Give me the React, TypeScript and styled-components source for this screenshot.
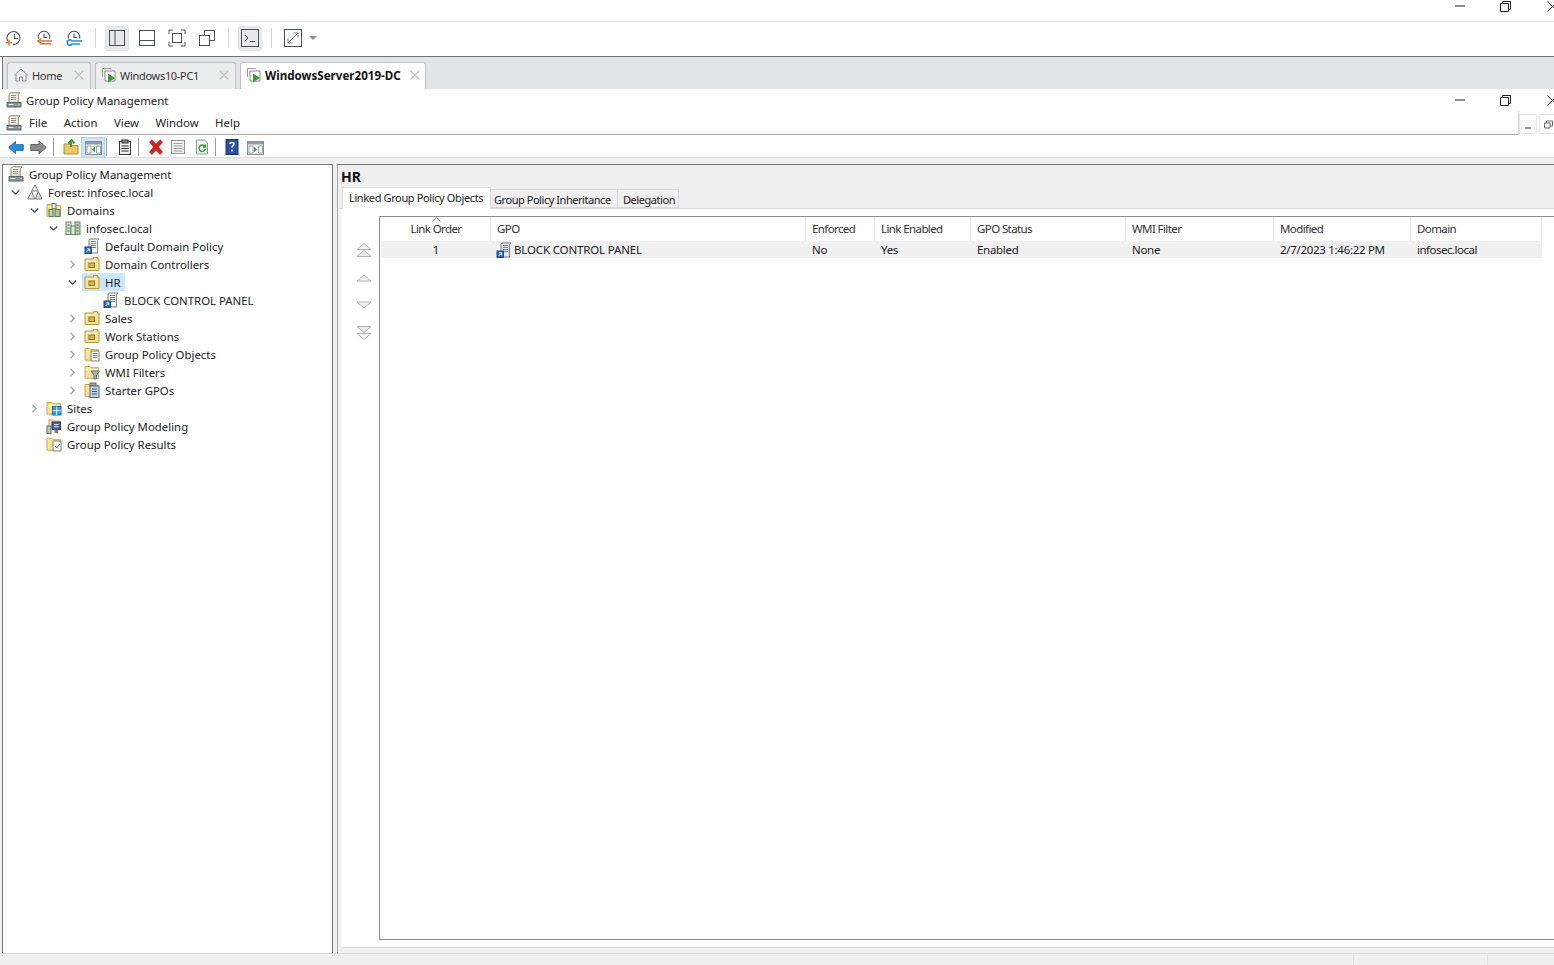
import React from "react";
import styled, { createGlobalStyle } from "styled-components";

const GlobalStyle = createGlobalStyle`
    html, body {
        margin: 0;
        padding: 0;
        background: #fff;
        overflow: hidden;
    }
    #root {
        height: 965px;
    }
`;

// ---------- icons ----------

const Svg = ({ size = 16, children }: { size?: number; children: React.ReactNode }) => (
    <svg width={size} height={size} viewBox="0 0 16 16" fill="none" style={{ display: "block", flexShrink: 0 }}>
        {children}
    </svg>
);

const GpmIcon = () => (
    <Svg>
        <path d="M4.5 .8h9.5l-1.8 2v7.5H3V2.5z" fill="#f6f2e2" stroke="#85857a" />
        <path d="M5 3.5h5M5 5.5h5M5 7.5h5" stroke="#8f8f85" />
        <path d="M1 10.5h14v4.5H1z" fill="#8a9397" stroke="#5e6468" />
        <path d="M2.5 12.5h5" stroke="#e6ecee" />
        <path d="M12 12.5h2" stroke="#a8d8a0" />
    </Svg>
);

const ForestIcon = () => (
    <Svg>
        <path d="M8 1l3.2 6H4.8z" fill="#f2f2f2" stroke="#7c7c7c" />
        <path d="M4.6 7.5l3.2 7.5H.8z" fill="#e6e6e6" stroke="#7c7c7c" />
        <path d="M11.4 7.5l3.6 7.5H8.2z" fill="#d5d5d5" stroke="#7c7c7c" />
    </Svg>
);

const FolderBase = () => (
    <>
        <path d="M1 2.5h5l1.2 1.2h7.3v10.5H1z" fill="#f7e29b" stroke="#c8a953" />
        <path d="M2 5.5h11.5" stroke="#fff6d2" />
    </>
);

const OuIcon = () => (
    <Svg>
        <path d="M1 3h8.5V1.4h4V3H15v11.5H1z" fill="#f7e29b" stroke="#b99a45" />
        <path d="M2 5h12" stroke="#fff6d2" />
        <rect x="5" y="7" width="5.5" height="4.5" fill="#d9b54a" stroke="#8d7429" />
    </Svg>
);

const DomainsIcon = () => (
    <Svg>
        <FolderBase />
        <rect x="6" y="1.5" width="4" height="5" fill="#dfe8dc" stroke="#6f8a6c" />
        <rect x="3" y="7.5" width="4" height="7" fill="#b9d0b5" stroke="#5f7a5c" />
        <rect x="9" y="7.5" width="5" height="7" fill="#a9c4a6" stroke="#5f7a5c" />
    </Svg>
);

const DomainIcon = () => (
    <Svg>
        <rect x="1" y="2" width="5" height="12.5" fill="#cfe0ca" stroke="#6a8a68" />
        <rect x="10" y="2" width="5" height="12.5" fill="#b6d0b2" stroke="#6a8a68" />
        <rect x="6" y="6" width="4" height="8.5" fill="#e3ece0" stroke="#6a8a68" />
        <path d="M2.5 5h2M2.5 8h2M2.5 11h2M11.5 5h2M11.5 8h2M11.5 11h2" stroke="#47664a" />
    </Svg>
);

const GpoLinkIcon = ({ color = "#f7f7f4" }: { color?: string }) => (
    <Svg>
        <path d="M6 1h9l-1.4 1.6V15H5V2.5z" fill={color} stroke="#7f7f78" />
        <path d="M7 3.5h5M7 5.5h5M7 7.5h5M8 9.5h4" stroke="#6f7f90" />
        <rect x="1" y="9" width="6.5" height="6.5" fill="#2f6db3" stroke="#1d4a80" />
        <path d="M2.5 14l3-3M3.2 10.8h2.5v2.5" stroke="#fff" strokeWidth=".9" />
    </Svg>
);

const GpoFolderIcon = () => (
    <Svg>
        <FolderBase />
        <path d="M7 5h8v10H7z" fill="#f7f7f2" stroke="#80807a" />
        <path d="M8.5 7.5h5M8.5 9.5h5M8.5 11.5h5" stroke="#80807a" />
    </Svg>
);

const WmiIcon = () => (
    <Svg>
        <FolderBase />
        <path d="M7 7h8.5l-3 4v4h-2.5v-4z" fill="#9fb7c9" stroke="#5d7488" />
    </Svg>
);

const StarterIcon = () => (
    <Svg>
        <FolderBase />
        <rect x="6" y="1" width="6" height="3" fill="#a8a8a0" stroke="#66665f" />
        <rect x="6" y="4" width="9" height="11.5" fill="#c3d4e6" stroke="#4e6880" />
        <path d="M8 7h5M8 9.5h5M8 12h5" stroke="#3f5870" />
    </Svg>
);

const SitesIcon = () => (
    <Svg>
        <FolderBase />
        <rect x="6.5" y="6.5" width="8.5" height="8.5" fill="#3f9bd8" stroke="#1f6fa8" />
        <path d="M10.7 6.5V15M6.5 10.7H15" stroke="#d7effc" />
    </Svg>
);

const ModelingIcon = () => (
    <Svg>
        <path d="M3 2h5l1 1h5v6H3z" fill="#f7e29b" stroke="#c8a953" />
        <rect x="6" y="4" width="8.5" height="7.5" fill="#4a5fa8" stroke="#2b3a75" />
        <path d="M8 6.5h4.5M8 8.7h4.5" stroke="#e3e8ff" />
        <rect x="8.5" y="11.5" width="3.5" height="3.5" fill="#7a7a80" />
        <rect x="1" y="8" width="4" height="7.5" fill="#b9c8b9" stroke="#5f6f5f" />
    </Svg>
);

const ResultsIcon = () => (
    <Svg>
        <FolderBase />
        <path d="M7 5h8v10H7z" fill="#f7f7f2" stroke="#80807a" />
        <path d="M9 10l1.8 2 3-4" stroke="#2d6fb0" />
    </Svg>
);

const Chevron = ({ open }: { open: boolean }) => (
    <svg width="9" height="9" viewBox="0 0 9 9" fill="none" style={{ display: "block" }}>
        {open ? (
            <path d="M.8 2.5l3.7 3.7 3.7-3.7" stroke="#4d4d4d" strokeWidth="1.3" />
        ) : (
            <path d="M2.5 .8l3.7 3.7-3.7 3.7" stroke="#a6a6a6" strokeWidth="1.3" />
        )}
    </svg>
);

const HistoryIcon = ({ accent, kind }: { accent: string; kind: "add" | "back" | "tool" }) => (
    <svg width="18" height="18" viewBox="0 0 18 18" fill="none" style={{ display: "block" }}>
        {kind === "add" ? (
            <path d="M3 12.5A6.5 6.5 0 1 1 8 15.5M9.5 5v4.5H13" stroke="#4a5560" strokeWidth="1.1" />
        ) : (
            <path d="M3.4 9.5a5.8 5.8 0 1 1 11.2 0M9 4.5v4h3" stroke="#4a5560" strokeWidth="1.1" />
        )}
        {kind === "add" && <path d="M1 13.5h6M4 10.5v6" stroke={accent} strokeWidth="1.4" />}
        {kind === "back" && <path d="M17 12H4M6.5 9.5L3 12l3.5 2.5M5 14.8h11" stroke={accent} strokeWidth="1.5" />}
        {kind === "tool" && (
            <path d="M17 12H7a2.6 2.6 0 1 0 0 3h8M1.5 12h2" stroke={accent} strokeWidth="1.6" />
        )}
    </svg>
);

const LineIcon = ({ children }: { children: React.ReactNode }) => (
    <svg width="18" height="18" viewBox="0 0 18 18" fill="none" stroke="#4a4f55" strokeWidth="1" style={{ display: "block" }}>
        {children}
    </svg>
);

const VmIcon = () => (
    <Svg>
        <path d="M1.5 10V1.5H10" stroke="#9a9a9a" />
        <path d="M4 13V4h10v10H4z" fill="#fff" stroke="#8a8a8a" />
        <path d="M7 6.5l7 4.5-7 4.5z" fill="#3c9a2e" />
    </Svg>
);

const HomeIcon = () => (
    <Svg>
        <path d="M1 8.5L8 2l7 6.5M3 7.5V14h3.5v-4h3v4H13V7.5" stroke="#8a9099" />
    </Svg>
);

const TabClose = ({ color = "#c0c0c0" }: { color?: string }) => (
    <svg width="10" height="10" viewBox="0 0 10 10" fill="none" style={{ display: "block", flexShrink: 0 }}>
        <path d="M.5 .5l9 9M9.5 .5l-9 9" stroke={color} strokeWidth="1.2" />
    </svg>
);

const MinimizeGlyph = () => (
    <svg width="10" height="10" viewBox="0 0 10 10" style={{ display: "block" }}>
        <path d="M0 5h10" stroke="#222" />
    </svg>
);

const RestoreGlyph = () => (
    <svg width="11" height="11" viewBox="0 0 11 11" fill="none" style={{ display: "block" }}>
        <path d="M.5 2.5h8v8h-8zM2.5 2.5v-2h8v8h-2" stroke="#222" />
    </svg>
);

const CloseGlyph = () => (
    <svg width="11" height="11" viewBox="0 0 11 11" fill="none" style={{ display: "block" }}>
        <path d="M.5 .5l10 10M10.5 .5l-10 10" stroke="#222" />
    </svg>
);

const ArrowLeft = ({ fill, stroke, flip }: { fill: string; stroke: string; flip?: boolean }) => (
    <svg width="17" height="15" viewBox="0 0 17 15" style={{ display: "block", transform: flip ? "scaleX(-1)" : undefined }}>
        <path d="M.8 7.5L8 1v3.5h8.2v6H8V14z" fill={fill} stroke={stroke} />
    </svg>
);

const MoveArrow = ({ dir, double }: { dir: "up" | "down"; double?: boolean }) => (
    <svg width="16" height="16" viewBox="0 0 16 16" fill="none" style={{ display: "block", transform: dir === "down" ? "scaleY(-1)" : undefined }}>
        {double ? (
            <>
                <path d="M1 7.5L8 1.5l7 6z" fill="#f2f2f2" stroke="#b0b0b0" />
                <path d="M1 14.5L8 8.5l7 6z" fill="#e8e8e8" stroke="#b0b0b0" />
            </>
        ) : (
            <path d="M1 11L8 5l7 6z" fill="#f2f2f2" stroke="#b0b0b0" />
        )}
    </svg>
);

const WindowIcon = ({ play }: { play: "left" | "right" }) => (
    <svg width="17" height="15" viewBox="0 0 17 15" fill="none" style={{ display: "block" }}>
        <rect x=".5" y="1.5" width="16" height="13" fill="#f4f4f0" stroke="#8a8f92" />
        <path d="M1 2h15v2.5H1z" fill="#8fa0a8" />
        <path d="M2 6h4v7H2zM11.5 6h4v7h-4z" stroke="#9aa3a8" fill="#fff" />
        <path d={play === "left" ? "M10 6.8L7 9.5l3 2.7z" : "M7 6.8l3 2.7-3 2.7z"} fill="#3f8f50" />
    </svg>
);

// ---------- app chrome ----------

const Page = styled.div`
    display: flex;
    flex-direction: column;
    width: 1554px;
    height: 965px;
    overflow: hidden;
    background: #fff;
    font-family: "Noto Sans", "Open Sans", sans-serif;
    font-size: 11.4px;
    color: #222;
`;

const TitleBar = styled.div`
    display: flex;
    justify-content: flex-end;
    height: 21px;
    flex-shrink: 0;
    border-bottom: 1px solid #e4e4e4;
`;

const Controls = styled.div<{ $offset: number }>`
    display: flex;
    margin-right: -21px;
    padding-top: ${props => props.$offset}px;
`;

const ControlBox = styled.div`
    display: flex;
    justify-content: center;
    width: 46px;
`;

const RestoreBox = styled(ControlBox)`
    box-sizing: border-box;
    padding-right: 2px;
`;

const VmToolbar = styled.div`
    display: flex;
    align-items: center;
    gap: 6px;
    height: 32px;
    padding: 0 0 2px 2px;
    flex-shrink: 0;
    border-bottom: 1px solid #6f7173;
`;

const VmButton = styled.div<{ $active?: boolean }>`
    display: flex;
    align-items: center;
    justify-content: center;
    width: 24px;
    height: 25px;
    border-radius: 3px;
    background: ${props => props.$active ? "#e8e9ea" : "transparent"};
    border: 1px solid ${props => props.$active ? "#e2e3e4" : "transparent"};
    box-sizing: border-box;
`;

const VmSeparator = styled.div`
    width: 1px;
    height: 20px;
    margin: 0 3px;
    background: #d4d4d4;
`;

const Caret = styled.div`
    width: 0;
    height: 0;
    margin-left: -2px;
    border-left: 4px solid transparent;
    border-right: 4px solid transparent;
    border-top: 4px solid #8b8f93;
`;

const TabStrip = styled.div`
    display: flex;
    align-items: flex-end;
    gap: 4px;
    height: 32px;
    padding-left: 4px;
    margin-left: 2px;
    flex-shrink: 0;
    background: #e3e4e5;
    border-left: 1px solid #77797b;
`;

const VmTab = styled.div<{ $width: number; $active?: boolean }>`
    display: flex;
    align-items: center;
    gap: 2px;
    box-sizing: border-box;
    width: ${props => props.$width}px;
    height: 27px;
    padding: 0 ${props => props.$active ? 5 : 6}px 2px 5px;
    border: 1px solid #bdbfc1;
    border-bottom: none;
    border-radius: 3px 3px 0 0;
    background: ${props => props.$active ? "#fff" : "#eceded"};
    font-size: ${props => props.$active ? "11.6px" : "11px"};
    letter-spacing: ${props => props.$active ? "0" : "-0.3px"};
    font-weight: ${props => props.$active ? 700 : 400};
    color: ${props => props.$active ? "#111" : "#333"};
`;

const VmTabLabel = styled.span`
    flex: 1;
    padding-left: 1px;
    white-space: nowrap;
`;

// ---------- mmc ----------

const MmcTitle = styled.div`
    display: flex;
    align-items: center;
    gap: 4px;
    height: 22px;
    padding-left: 6px;
    flex-shrink: 0;
`;

const MmcTitleText = styled.span`
    flex: 1;
    white-space: nowrap;
`;

const MenuRow = styled.div`
    display: flex;
    height: 24px;
    flex-shrink: 0;
`;

const MenuBar = styled.div`
    flex: 1;
    display: flex;
    align-items: center;
    gap: 16.5px;
    padding-left: 6px;
    border-bottom: 1px solid #ababab;
    border-right: 1px solid #d8d8d8;
`;

const MenuIcon = styled.div`
    width: 23px;
    margin-right: -16.5px;
`;

const MdiButtons = styled.div`
    display: flex;
    gap: 2px;
    width: 35px;
    padding: 3px 0 0 0;
`;

const MdiButton = styled.div`
    display: flex;
    align-items: center;
    justify-content: center;
    flex-shrink: 0;
    width: 16px;
    height: 18px;
    border: 1px solid #e6e6e6;
`;

const MmcToolbar = styled.div`
    display: flex;
    align-items: center;
    box-sizing: border-box;
    height: 23px;
    padding: 2px 0 0 7px;
    flex-shrink: 0;
    border-bottom: 1px solid #dedede;
`;

const ToolButton = styled.div<{ $active?: boolean; $width?: number }>`
    display: flex;
    align-items: center;
    justify-content: center;
    flex-shrink: 0;
    box-sizing: border-box;
    width: ${props => props.$width ?? 23}px;
    height: 21px;
    background: ${props => props.$active ? "#cde6f7" : "transparent"};
    border: 1px solid ${props => props.$active ? "#a8d4f0" : "transparent"};
`;

const ToolGap = styled.div<{ $width: number }>`
    width: ${props => props.$width}px;
    flex-shrink: 0;
`;

const ToolSeparator = styled.div`
    width: 1px;
    height: 18px;
    margin: 0 1px;
    background: #9c9c9c;
`;

const Spacer = styled.div`
    height: 6px;
    flex-shrink: 0;
    background: #f0f0f0;
`;

const Main = styled.div`
    flex: 1;
    display: flex;
    min-height: 0;
    background: #f0f0f0;
`;

// ---------- tree ----------

const TreePanel = styled.div`
    width: 329px;
    height: 788px;
    margin-left: 2px;
    flex-shrink: 0;
    background: #fff;
    border: 1px solid #77797b;
`;

const TreeRow = styled.div<{ $level: number }>`
    display: flex;
    align-items: center;
    height: 18px;
    padding-left: ${props => props.$level === 0 ? 5 : 3 + (props.$level - 1) * 19}px;
    white-space: nowrap;
`;

const Twisty = styled.div`
    display: flex;
    align-items: center;
    justify-content: center;
    box-sizing: border-box;
    width: 21px;
    height: 18px;
    padding-right: 3px;
`;

const TreeLabel = styled.div<{ $selected?: boolean }>`
    display: flex;
    align-items: center;
    gap: 5px;
    height: 18px;
    margin-left: -2px;
    padding: 0 4px 0 2px;
    background: ${props => props.$selected ? "#cce8ff" : "transparent"};
`;

// ---------- right pane ----------

const Details = styled.div`
    flex: 1;
    display: flex;
    flex-direction: column;
    margin-left: 4px;
    min-width: 0;
    border-top: 1px solid #77797b;
    border-left: 1px solid #a8a8a8;
`;

const DetailsTitle = styled.div`
    height: 23px;
    padding-left: 3px;
    font-size: 14px;
    font-weight: 700;
    line-height: 24px;
    color: #111;
`;

const DetailTabs = styled.div`
    display: flex;
    align-items: flex-end;
    height: 20px;
    padding-left: 4px;
    border-bottom: 1px solid #d9d9d9;
`;

const DetailTab = styled.div<{ $active?: boolean; $width: number; $pad: number }>`
    box-sizing: border-box;
    width: ${props => props.$width}px;
    height: ${props => props.$active ? 22 : 19}px;
    margin-bottom: ${props => props.$active ? -1 : 0}px;
    padding: 1px 0 0 ${props => props.$pad}px;
    line-height: 18px;
    font-size: 11px;
    letter-spacing: ${props => props.$active ? "-0.37px" : "-0.45px"};
    white-space: nowrap;
    background: ${props => props.$active ? "#fff" : "#f0f0f0"};
    border: 1px solid #d9d9d9;
    border-bottom: ${props => props.$active ? "none" : "1px solid #d9d9d9"};
    border-left: ${props => props.$active ? "1px solid #d9d9d9" : "none"};
    z-index: ${props => props.$active ? 1 : 0};
`;

const TabBody = styled.div`
    display: flex;
    height: 739px;
    margin-left: 3px;
    padding: 7px 0 7px;
    box-sizing: border-box;
    background: #fff;
    border-left: 1px solid #fff;
    border-bottom: 1px solid #dcdcdc;
`;

const MoveColumn = styled.div`
    display: flex;
    flex-direction: column;
    align-items: center;
    gap: 11.5px;
    width: 37px;
    padding: 26px 0 0 6px;
    box-sizing: border-box;
    flex-shrink: 0;
`;

const ListBox = styled.div`
    flex: 1;
    padding-left: 1px;
    border-top: 1px solid #8c8c8c;
    border-left: 1px solid #8c8c8c;
    border-bottom: 1px solid #8c8c8c;
    font-size: 11.5px;
`;

const GridRow = styled.div<{ $head?: boolean }>`
    display: grid;
    grid-template-columns: 110px 315px 69px 96px 155px 148px 137px 131px;
    align-items: center;
    width: 1161px;
    height: ${props => props.$head ? 24 : 17}px;
    background: ${props => props.$head ? "#fff" : "#f0f0f0"};
`;

const HeadCell = styled.div<{ $center?: boolean }>`
    position: relative;
    display: flex;
    align-items: center;
    justify-content: ${props => props.$center ? "center" : "flex-start"};
    height: 100%;
    padding: 0 0 1px ${props => props.$center ? 1 : 6}px;
    box-sizing: border-box;
    border-right: 1px solid #e5e5e5;
    color: #333;
    letter-spacing: -0.6px;
`;

const SortMark = styled.svg`
    position: absolute;
    top: 0;
    left: 51px;
`;

const Cell = styled.div<{ $center?: boolean; $spacing?: number }>`
    display: flex;
    align-items: center;
    gap: 3px;
    justify-content: ${props => props.$center ? "center" : "flex-start"};
    padding-left: ${props => props.$center ? 0 : 6}px;
    white-space: nowrap;
    color: #222;
    letter-spacing: ${props => props.$spacing ?? -0.3}px;
`;

const CellIcon = styled.span`
    margin: 0 -1px;
`;

const StatusBar = styled.div`
    display: flex;
    justify-content: flex-end;
    height: 11px;
    flex-shrink: 0;
    background: #f0f0f0;
    border-top: 1px solid #dcdcdc;
`;

const StatusCell = styled.div<{ $width: number }>`
    width: ${props => props.$width}px;
    border-left: 1px solid #e2e2e2;
`;

// ---------- data ----------

type TreeItem = {
    label: string;
    level: number;
    icon: React.ReactNode;
    open?: boolean;
    selected?: boolean;
};

const treeItems: TreeItem[] = [
    { label: "Group Policy Management", level: 0, icon: <GpmIcon /> },
    { label: "Forest: infosec.local", level: 1, icon: <ForestIcon />, open: true },
    { label: "Domains", level: 2, icon: <DomainsIcon />, open: true },
    { label: "infosec.local", level: 3, icon: <DomainIcon />, open: true },
    { label: "Default Domain Policy", level: 4, icon: <GpoLinkIcon /> },
    { label: "Domain Controllers", level: 4, icon: <OuIcon />, open: false },
    { label: "HR", level: 4, icon: <OuIcon />, open: true, selected: true },
    { label: "BLOCK CONTROL PANEL", level: 5, icon: <GpoLinkIcon /> },
    { label: "Sales", level: 4, icon: <OuIcon />, open: false },
    { label: "Work Stations", level: 4, icon: <OuIcon />, open: false },
    { label: "Group Policy Objects", level: 4, icon: <GpoFolderIcon />, open: false },
    { label: "WMI Filters", level: 4, icon: <WmiIcon />, open: false },
    { label: "Starter GPOs", level: 4, icon: <StarterIcon />, open: false },
    { label: "Sites", level: 2, icon: <SitesIcon />, open: false },
    { label: "Group Policy Modeling", level: 2, icon: <ModelingIcon /> },
    { label: "Group Policy Results", level: 2, icon: <ResultsIcon /> },
];

const columns = ["Link Order", "GPO", "Enforced", "Link Enabled", "GPO Status", "WMI Filter", "Modified", "Domain"];

export default function App() {
    return (
        <Page>
            <GlobalStyle />
            <TitleBar>
                <Controls $offset={1}>
                    <ControlBox><MinimizeGlyph /></ControlBox>
                    <RestoreBox><RestoreGlyph /></RestoreBox>
                    <ControlBox><CloseGlyph /></ControlBox>
                </Controls>
            </TitleBar>

            <VmToolbar>
                <VmButton><HistoryIcon kind="add" accent="#e8702a" /></VmButton>
                <VmButton><HistoryIcon kind="back" accent="#e8702a" /></VmButton>
                <VmButton><HistoryIcon kind="tool" accent="#2f8fc9" /></VmButton>
                <VmSeparator />
                <VmButton $active>
                    <LineIcon><rect x="1.5" y="1.5" width="15" height="15" /><path d="M7 1.5v15" /></LineIcon>
                </VmButton>
                <VmButton>
                    <LineIcon><rect x="1.5" y="1.5" width="15" height="15" /><path d="M1.5 11.5h15" /></LineIcon>
                </VmButton>
                <VmButton>
                    <LineIcon>
                        <path d="M1 5V1h4M13 1h4v4M17 13v4h-4M5 17H1v-4" />
                        <rect x="4.5" y="4.5" width="9" height="9" />
                    </LineIcon>
                </VmButton>
                <VmButton>
                    <LineIcon><rect x="1.5" y="6.5" width="10" height="10" /><path d="M6.5 6.5v-5h10v10h-5" /></LineIcon>
                </VmButton>
                <VmSeparator />
                <VmButton $active>
                    <LineIcon>
                        <rect x=".5" y=".5" width="17" height="17" />
                        <path d="M4 6l3 3-3 3M9 12.5h5" stroke="#333" />
                    </LineIcon>
                </VmButton>
                <VmSeparator />
                <VmButton>
                    <LineIcon>
                        <rect x=".5" y=".5" width="17" height="17" />
                        <path d="M4 14l10-10M9.5 4H14v4.5M4 9.5V14h4.5" stroke="#7d8387" />
                    </LineIcon>
                </VmButton>
                <Caret />
            </VmToolbar>

            <TabStrip>
                <VmTab $width={84}>
                    <HomeIcon />
                    <VmTabLabel>Home</VmTabLabel>
                    <TabClose />
                </VmTab>
                <VmTab $width={141}>
                    <VmIcon />
                    <VmTabLabel>Windows10-PC1</VmTabLabel>
                    <TabClose />
                </VmTab>
                <VmTab $width={186} $active>
                    <VmIcon />
                    <VmTabLabel>WindowsServer2019-DC</VmTabLabel>
                    <TabClose />
                </VmTab>
            </TabStrip>

            <MmcTitle>
                <GpmIcon />
                <MmcTitleText>Group Policy Management</MmcTitleText>
                <Controls $offset={0}>
                    <ControlBox><MinimizeGlyph /></ControlBox>
                    <RestoreBox><RestoreGlyph /></RestoreBox>
                    <ControlBox><CloseGlyph /></ControlBox>
                </Controls>
            </MmcTitle>

            <MenuRow>
                <MenuBar>
                    <MenuIcon><GpmIcon /></MenuIcon>
                    <span>File</span>
                    <span>Action</span>
                    <span>View</span>
                    <span>Window</span>
                    <span>Help</span>
                </MenuBar>
                <MdiButtons>
                    <MdiButton>
                        <svg width="9" height="9" viewBox="0 0 9 9" fill="none">
                            <path d="M1 8h6" stroke="#666" strokeWidth="1.4" />
                        </svg>
                    </MdiButton>
                    <MdiButton>
                        <svg width="9" height="9" viewBox="0 0 9 9" fill="none">
                            <path d="M.5 3h5.5v5H.5zM2.5 3V1h6v5H6" stroke="#666" />
                        </svg>
                    </MdiButton>
                </MdiButtons>
            </MenuRow>

            <MmcToolbar>
                <ToolButton $width={18}><ArrowLeft fill="#2d8fdc" stroke="#1b66a8" /></ToolButton>
                <ToolButton $width={27}><ArrowLeft fill="#8a8a8a" stroke="#666" flip /></ToolButton>
                <ToolSeparator />
                <ToolGap $width={5} />
                <ToolButton $width={21}>
                    <Svg>
                        <path d="M1 5h6l1 1.5h7V15H1z" fill="#eac96a" stroke="#b08f38" />
                        <path d="M8 8V3M5.5 4.5L8.5 1l3 3.5" stroke="#3d9a3a" strokeWidth="2" />
                    </Svg>
                </ToolButton>
                <ToolButton $active $width={24}><WindowIcon play="left" /></ToolButton>
                <ToolSeparator />
                <ToolGap $width={6} />
                <ToolButton $width={21}>
                    <Svg>
                        <rect x="2.5" y="2.5" width="11" height="13" fill="#eee" stroke="#333" />
                        <rect x="5" y="1" width="6" height="3" fill="#888" stroke="#333" />
                        <path d="M4.5 7h7M4.5 9.5h7M4.5 12h7" stroke="#333" />
                    </Svg>
                </ToolButton>
                <ToolGap $width={2} />
                <ToolSeparator />
                <ToolGap $width={4} />
                <ToolButton $width={23}>
                    <Svg>
                        <path d="M1.5 3L4 .8 8 5l4-4.2L14.5 3 10.5 8l4 5-2.5 2.5L8 11l-4 4.5L1.5 13l4-5z" fill="#d92020" stroke="#a81818" strokeWidth=".6" />
                    </Svg>
                </ToolButton>
                <ToolButton $width={22}>
                    <Svg>
                        <rect x="1.5" y="1.5" width="13" height="13" fill="#f2f2ee" stroke="#8a9a92" />
                        <path d="M3.5 4.5h9M3.5 7h9M3.5 9.5h9M3.5 12h9" stroke="#9aa39e" />
                    </Svg>
                </ToolButton>
                <ToolButton $width={25}>
                    <Svg>
                        <path d="M2.5 1h8l3 3v11h-11z" fill="#f4f4f0" stroke="#8a9a92" />
                        <path d="M11 7.5a3.2 3.2 0 1 0 .4 2.5M11.5 5.5v2.5H9" stroke="#2f9a3a" strokeWidth="1.4" />
                    </Svg>
                </ToolButton>
                <ToolSeparator />
                <ToolGap $width={3} />
                <ToolButton $width={23}>
                    <Svg>
                        <rect x="2" y="0.5" width="12" height="15" fill="#2b4fa8" stroke="#1b3270" />
                        <path d="M6 5c0-2 4-2 4 0 0 1.6-2 1.6-2 3.5M8 10.5v2" stroke="#fff" strokeWidth="1.5" />
                    </Svg>
                </ToolButton>
                <ToolButton $width={24}><WindowIcon play="right" /></ToolButton>
            </MmcToolbar>

            <Spacer />

            <Main>
                <TreePanel>
                    {treeItems.map(item => (
                        <TreeRow key={item.label} $level={item.level}>
                            {item.level > 0 && (
                                <Twisty>
                                    {item.open !== undefined && <Chevron open={item.open} />}
                                </Twisty>
                            )}
                            <TreeLabel $selected={item.selected}>
                                {item.icon}
                                <span>{item.label}</span>
                            </TreeLabel>
                        </TreeRow>
                    ))}
                </TreePanel>

                <Details>
                    <DetailsTitle>HR</DetailsTitle>
                    <DetailTabs>
                        <DetailTab $active $width={149} $pad={6}>Linked Group Policy Objects</DetailTab>
                        <DetailTab $width={127} $pad={3}>Group Policy Inheritance</DetailTab>
                        <DetailTab $width={61} $pad={5}>Delegation</DetailTab>
                    </DetailTabs>
                    <TabBody>
                        <MoveColumn>
                            <MoveArrow dir="up" double />
                            <MoveArrow dir="up" />
                            <MoveArrow dir="down" />
                            <MoveArrow dir="down" double />
                        </MoveColumn>
                        <ListBox>
                            <GridRow $head>
                                {columns.map((col, i) => (
                                    <HeadCell key={col} $center={i === 0}>
                                        {i === 0 && (
                                            <SortMark width="9" height="5" viewBox="0 0 9 5" fill="none">
                                                <path d="M.5 4.5l4-4 4 4" stroke="#777" />
                                            </SortMark>
                                        )}
                                        {col}
                                    </HeadCell>
                                ))}
                            </GridRow>
                            <GridRow>
                                <Cell $center>1</Cell>
                                <Cell $spacing={-0.15}><CellIcon><GpoLinkIcon color="#dfe6ee" /></CellIcon>BLOCK CONTROL PANEL</Cell>
                                <Cell>No</Cell>
                                <Cell>Yes</Cell>
                                <Cell>Enabled</Cell>
                                <Cell>None</Cell>
                                <Cell>2/7/2023 1:46:22 PM</Cell>
                                <Cell $spacing={-0.5}>infosec.local</Cell>
                            </GridRow>
                        </ListBox>
                    </TabBody>
                </Details>
            </Main>

            <StatusBar>
                <StatusCell $width={133} />
                <StatusCell $width={66} />
            </StatusBar>
        </Page>
    );
}
